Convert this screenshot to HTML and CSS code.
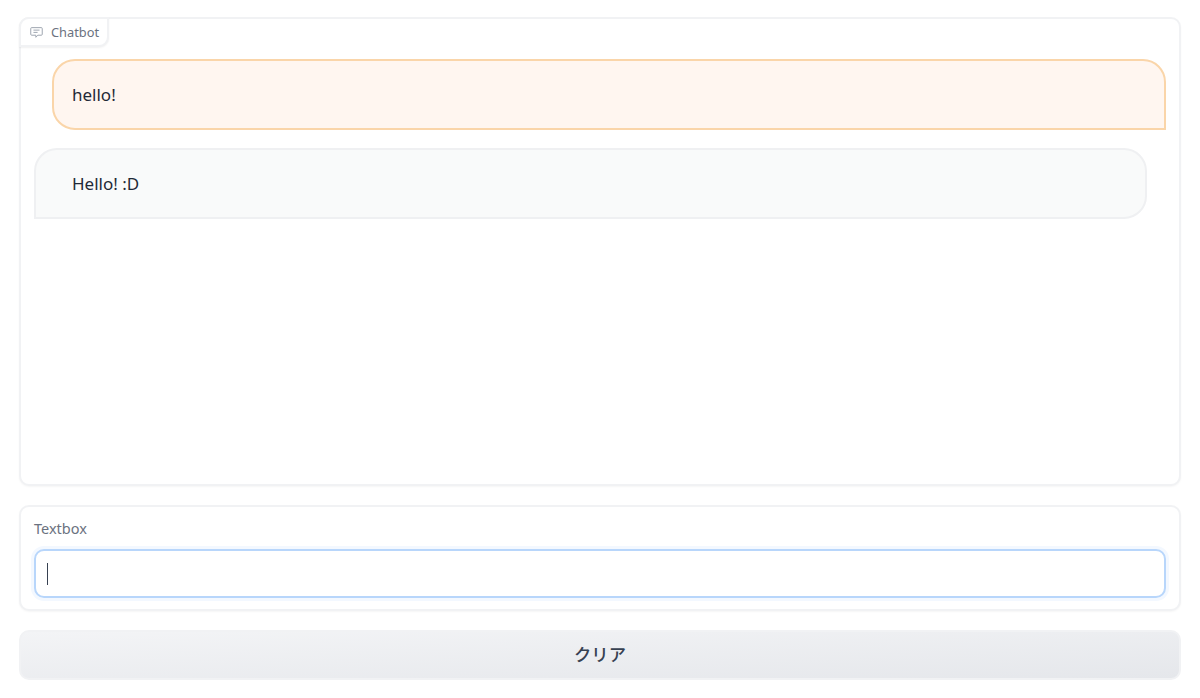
FILE: index.html
```html
<!DOCTYPE html>
<html lang="en">
<head>
<meta charset="UTF-8">
<title>Chatbot</title>
<link rel="stylesheet" href="styles.css">
</head>
<body>
    <div class="page">
        <div class="card chat-card">
            <div class="tab-label">
                <svg class="tab-icon" viewBox="0 0 12 12" width="13" height="13" fill="none" stroke="#9ca3af" stroke-width="0.9">
                    <path d="M1.500 1.500h9a.8.8 0 0 1 .8.8v5.400a.8.8 0 0 1-.8.8H7.200L5.400 10.400V8.500H1.500a.8.8 0 0 1-.8-.8V2.300a.8.8 0 0 1 .8-.8z"/>
                    <path d="M3.200 3.800h5.600M3.200 5.900h3.800"/>
                </svg>
                <span>Chatbot</span>
            </div>
            <div class="messages">
                <div class="bubble user">hello!</div>
                <div class="bubble bot">Hello! :D</div>
            </div>
        </div>

        <div class="card text-card">
            <label class="field-label" for="msg">Textbox</label>
            <div class="input-box" id="msg"><span class="caret"></span></div>
        </div>

        <button class="clear-btn" type="button">クリア</button>
    </div>
</body>
</html>
```

FILE: styles.css
```css
* {
    box-sizing: border-box;
}

body {
    margin: 0;
    background: #fff;
    font-family: "Noto Sans", "Noto Sans CJK JP", sans-serif;
    color: #1f2937;
}

.page {
    display: flex;
    flex-direction: column;
    gap: 19px;
    padding: 17px 19px 0 19px;
}

.card {
    background: #fff;
    border: 2px solid #f1f2f4;
    border-radius: 10px;
    box-shadow: 0 1px 2px rgba(0, 0, 0, 0.04);
}

.chat-card {
    position: relative;
    height: 469px;
}

.tab-label {
    position: absolute;
    top: -2px;
    left: -2px;
    display: flex;
    align-items: center;
    gap: 8px;
    width: 90px;
    height: 30px;
    padding: 0 0 0 9px;
    background: #fff;
    border: 2px solid #f1f2f4;
    border-radius: 10px 0 10px 0;
    box-shadow: 0 1px 2px rgba(0, 0, 0, 0.06);
    font-size: 12.8px;
    color: #6b7280;
}

.messages {
    display: flex;
    flex-direction: column;
    gap: 18px;
    padding: 40px 13px 0 13px;
}

.bubble {
    display: flex;
    align-items: center;
    font-size: 17px;
    border-radius: 23px;
}

.user {
    align-self: flex-end;
    width: 1114px;
    height: 71px;
    padding-left: 18px;
    background: #fff6f0;
    border: 2px solid #fad5a9;
    border-bottom-right-radius: 0;
}

.bot {
    align-self: flex-start;
    width: 1113px;
    height: 71px;
    padding-left: 36px;
    background: #f9fafa;
    border: 2px solid #eff0f2;
    border-bottom-left-radius: 0;
}

.text-card {
    height: 106px;
    padding: 12px 13px 11px 13px;
}

.field-label {
    display: block;
    font-size: 14.5px;
    line-height: 19px;
    color: #6b7280;
    margin-bottom: 11px;
}

.input-box {
    display: flex;
    align-items: center;
    height: 49px;
    padding-left: 11px;
    background: #fff;
    border: 2px solid #b8d6fb;
    border-radius: 10px;
    box-shadow: 0 0 0 3px #f3f8ff;
}

.caret {
    width: 1px;
    height: 22px;
    background: #374151;
}

.clear-btn {
    height: 50px;
    width: 100%;
    padding-bottom: 5px;
    border: 2px solid #f1f2f4;
    border-radius: 10px;
    background: linear-gradient(to bottom right, #f3f4f6, #e5e7eb);
    font-family: "Noto Sans", "Noto Sans CJK JP", sans-serif;
    font-size: 17.3px;
    font-weight: 500;
    color: #374151;
}
```
